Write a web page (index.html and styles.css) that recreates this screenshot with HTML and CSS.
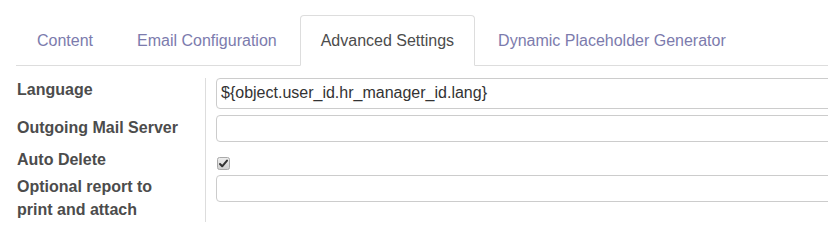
FILE: index.html
```html
<!DOCTYPE html>
<html lang="en">
<head>
    <meta charset="UTF-8">
    <title>Advanced Settings</title>
    <link rel="stylesheet" href="styles.css">
</head>
<body>
    <ul class="nav-tabs">
        <li class="tab">Content</li>
        <li class="tab">Email Configuration</li>
        <li class="tab active">Advanced Settings</li>
        <li class="tab">Dynamic Placeholder Generator</li>
    </ul>
    <div class="form-group">
        <div class="label row1">Language</div>
        <div class="field row1"><div class="input tall">${object.user_id.hr_manager_id.lang}</div></div>

        <div class="label row2">Outgoing Mail Server</div>
        <div class="field row2"><div class="input"></div></div>

        <div class="label row3">Auto Delete</div>
        <div class="field row3">
            <span class="checkbox">
                <svg width="13" height="13" viewBox="0 0 13 13">
                    <defs>
                        <linearGradient id="cb" x1="0" y1="0" x2="0" y2="1">
                            <stop offset="0" stop-color="#eeeeee"/>
                            <stop offset="1" stop-color="#cfcfcf"/>
                        </linearGradient>
                    </defs>
                    <rect x="0.5" y="0.5" width="12" height="12" rx="2" fill="url(#cb)" stroke="#a9a9a9"/>
                    <path d="M3 7 L5.2 9.3 L10 3.6" fill="none" stroke="#333" stroke-width="2" stroke-linecap="round" stroke-linejoin="round"/>
                </svg>
            </span>
        </div>

        <div class="label row4">Optional report to print and attach</div>
        <div class="field row4"><div class="input"></div></div>
    </div>
</body>
</html>
```

FILE: styles.css
```css
html, body {
    margin: 0;
    overflow: hidden;
}
body {
    font-family: "Liberation Sans", Arial, sans-serif;
    background: #fff;
    color: #4c4c4c;
    width: 828px;
    height: 230px;
}
.nav-tabs {
    list-style: none;
    margin: 15px 0 0 16px;
    padding: 0 0 0 1px;
    display: flex;
    border-bottom: 1px solid #dddddd;
}
.tab {
    font-size: 16px;
    line-height: 20px;
    padding: 15px 20px 14px;
    margin-right: 2px;
    margin-bottom: -1px;
    border: 1px solid transparent;
    border-radius: 4px 4px 0 0;
    color: #7c7bad;
    white-space: nowrap;
}
.tab:first-child {
    margin-left: -1px;
}
.tab.active {
    color: #4c4c4c;
    background: #fff;
    border-color: #dddddd;
    border-bottom-color: #fff;
}
.form-group {
    display: grid;
    grid-template-columns: 189px 640px;
    margin: 12px 0 0 17px;
}
.label {
    font-weight: bold;
    font-size: 16px;
    line-height: 23px;
    border-right: 1px solid #dddddd;
    padding-right: 20px;
}
.field {
    padding-left: 10px;
}
.row1 { height: 37px; }
.row2 { height: 33px; }
.row3 { height: 27px; }
.row4 { height: 47px; }
.label.row2 { padding-top: 1px; box-sizing: border-box; }
.input {
    box-sizing: border-box;
    height: 27px;
    border: 1px solid #cccccc;
    border-radius: 4px;
    padding: 0 4px;
    font-size: 16px;
    line-height: 28px;
    color: #333;
}
.input.tall {
    height: 31px;
}
.checkbox {
    display: block;
    width: 13px;
    height: 13px;
    margin: 9px 0 0 1px;
}
.checkbox svg {
    display: block;
}
```
